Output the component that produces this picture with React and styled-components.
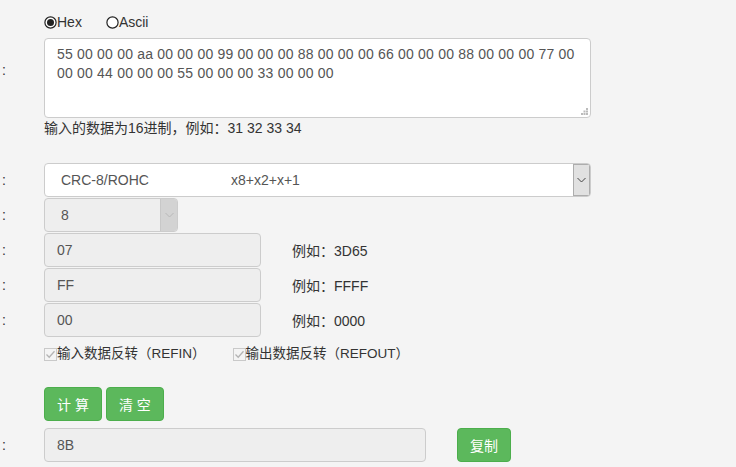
import React from 'react';
import styled, { createGlobalStyle } from 'styled-components';

const GlobalStyle = createGlobalStyle`
    html, body {
        margin: 0;
        background: #f4f4f4;
    }
    body {
        font-family: "Liberation Sans", "Noto Sans CJK SC", sans-serif;
        font-size: 14px;
        color: #333;
        overflow: hidden;
    }
`

const Page = styled.div`
    padding-top: 11px;
    display: flex;
    flex-direction: column;
`

const Row = styled.div`
    display: grid;
    grid-template-columns: 6px 1fr;
    column-gap: 38px;
    align-items: ${p => (p.$top ? 'start' : 'center')};
    margin-top: ${p => p.$mt || 0}px;
`

const Label = styled.div`
    display: flex;
    justify-content: flex-end;
    white-space: nowrap;
    line-height: 20px;
    margin-top: ${p => p.$offset || 0}px;
`

const Field = styled.div`
    display: flex;
    align-items: center;
    gap: ${p => p.$gap || 0}px;
`

const RadioGroup = styled.div`
    display: flex;
    align-items: center;
    gap: 24px;
    line-height: 20px;
    padding-top: 1px;
`

const Choice = styled.label`
    display: flex;
    align-items: center;
    font-size: ${p => p.$size || 14}px;
`

const AreaWrap = styled.div`
    position: relative;
    width: 547px;
`

const TextArea = styled.textarea`
    box-sizing: border-box;
    width: 547px;
    height: 80px;
    padding: 6px 12px;
    border: 1px solid #ccc;
    border-radius: 4px;
    background: #fff;
    font-family: "Liberation Sans", "Noto Sans CJK SC", sans-serif;
    font-size: 14px;
    line-height: 19px;
    letter-spacing: 0.2px;
    color: #555;
    resize: none;
    outline: none;
    display: block;
`

const Grip = styled.svg`
    position: absolute;
    right: 3px;
    bottom: 3px;
`

const Help = styled.div`
    line-height: 20px;
    font-size: 14px;
    color: #333;
`

const Stack = styled.div`
    display: flex;
    flex-direction: column;
    gap: 1px;
    margin-top: 25px;
`

const SelectBox = styled.div`
    box-sizing: border-box;
    width: ${p => p.$width}px;
    height: 34px;
    display: flex;
    border: 1px solid #ccc;
    border-radius: 4px;
    background: ${p => (p.$disabled ? '#eee' : '#fff')};
    color: #555;
    overflow: hidden;
`

const SelectText = styled.div`
    flex: 1;
    display: flex;
    align-items: center;
    padding-left: 16px;
`

const ModelName = styled.span`
    width: 170px;
`

const Arrow = styled.div`
    box-sizing: border-box;
    width: 17px;
    display: flex;
    align-items: center;
    justify-content: center;
    background: ${p => (p.$disabled ? '#d3d3d3' : '#e1e1e1')};
    border: ${p => (p.$disabled ? 'none' : '1px solid #adadad')};
    border-left: 1px solid ${p => (p.$disabled ? '#c8c8c8' : '#adadad')};
    color: ${p => (p.$disabled ? '#b8b8b8' : '#444')};
`

const Input = styled.input`
    box-sizing: border-box;
    width: ${p => p.$width}px;
    height: 34px;
    padding: 0 12px;
    border: 1px solid #ccc;
    border-radius: 4px;
    background: #eee;
    font-family: "Liberation Sans", "Noto Sans CJK SC", sans-serif;
    font-size: 14px;
    color: #555;
    outline: none;
`

const Example = styled.span`
    font-size: 14px;
    color: #333;
`

const Checks = styled.div`
    display: flex;
    align-items: center;
    gap: 27px;
    line-height: 20px;
`

const Buttons = styled.div`
    display: flex;
    gap: 4px;
`

const Button = styled.button`
    box-sizing: border-box;
    height: 34px;
    padding: 0 12px;
    border: 1px solid #4cae4c;
    border-radius: 4px;
    background: #5cb85c;
    color: #fff;
    font-family: "Liberation Sans", "Noto Sans CJK SC", sans-serif;
    font-size: 14px;
    white-space: pre;
    cursor: pointer;
`

const Radio = ({ checked }) => (
    <svg width="13" height="13" viewBox="0 0 13 13">
        <circle cx="6.5" cy="6.5" r="5.6" fill="#fff" stroke="#222" strokeWidth="1.2" />
        {checked && <circle cx="6.5" cy="6.5" r="3.5" fill="#222" />}
    </svg>
)

const CheckMark = () => (
    <svg width="13" height="13" viewBox="0 0 13 13">
        <rect x="0.5" y="0.5" width="12" height="12" fill="#f4f4f4" stroke="#c9c9c9" />
        <path d="M2.5 6.5 L5.2 9.2 L10.5 3.2" fill="none" stroke="#b3b3b3" strokeWidth="1.3" />
    </svg>
)

const Chevron = () => (
    <svg width="9" height="6" viewBox="0 0 9 6">
        <path d="M0.5 1 L4.5 5 L8.5 1" fill="none" stroke="currentColor" strokeWidth="1" />
    </svg>
)

const App = () => {
    return (
        <Page>
            <GlobalStyle />
            <Row>
                <span />
                <RadioGroup>
                    <Choice><Radio checked />Hex</Choice>
                    <Choice><Radio />Ascii</Choice>
                </RadioGroup>
            </Row>

            <Row $top $mt={6}>
                <Label $offset={22}>:</Label>
                <div>
                    <AreaWrap>
                        <TextArea
                            readOnly
                            value="55 00 00 00 aa 00 00 00 99 00 00 00 88 00 00 00 66 00 00 00 88 00 00 00 77 00 00 00 44 00 00 00 55 00 00 00 33 00 00 00"
                        />
                        <Grip width="7" height="7" viewBox="0 0 7 7">
                            <rect x="5" y="0" width="2" height="2" fill="#bbb" />
                            <rect x="2.5" y="2.5" width="2" height="2" fill="#bbb" />
                            <rect x="5" y="2.5" width="2" height="2" fill="#bbb" />
                            <rect x="0" y="5" width="2" height="2" fill="#bbb" />
                            <rect x="2.5" y="5" width="2" height="2" fill="#bbb" />
                            <rect x="5" y="5" width="2" height="2" fill="#bbb" />
                        </Grip>
                    </AreaWrap>
                    <Help>输入的数据为16进制，例如：31 32 33 34</Help>
                </div>
            </Row>

            <Stack>
                <Row>
                    <Label>:</Label>
                    <SelectBox $width={547}>
                        <SelectText>
                            <ModelName>CRC-8/ROHC</ModelName>
                            <span>x8+x2+x+1</span>
                        </SelectText>
                        <Arrow><Chevron /></Arrow>
                    </SelectBox>
                </Row>
                <Row>
                    <Label>:</Label>
                    <SelectBox $width={134} $disabled>
                        <SelectText>8</SelectText>
                        <Arrow $disabled><Chevron /></Arrow>
                    </SelectBox>
                </Row>
                <Row>
                    <Label>:</Label>
                    <Field $gap={31}>
                        <Input $width={217} value="07" disabled />
                        <Example>例如：3D65</Example>
                    </Field>
                </Row>
                <Row>
                    <Label>:</Label>
                    <Field $gap={31}>
                        <Input $width={217} value="FF" disabled />
                        <Example>例如：FFFF</Example>
                    </Field>
                </Row>
                <Row>
                    <Label>:</Label>
                    <Field $gap={31}>
                        <Input $width={217} value="00" disabled />
                        <Example>例如：0000</Example>
                    </Field>
                </Row>
            </Stack>

            <Row $mt={7}>
                <span />
                <Checks>
                    <Choice as="span" $size={13.5}><CheckMark />输入数据反转（REFIN）</Choice>
                    <Choice as="span" $size={13.5}><CheckMark />输出数据反转（REFOUT）</Choice>
                </Checks>
            </Row>

            <Row $mt={23}>
                <span />
                <Buttons>
                    <Button>计 算</Button>
                    <Button>清 空</Button>
                </Buttons>
            </Row>

            <Row $mt={7}>
                <Label>:</Label>
                <Field $gap={31}>
                    <Input $width={382} value="8B" readOnly />
                    <Button>复制</Button>
                </Field>
            </Row>
        </Page>
    )
}

export default App
